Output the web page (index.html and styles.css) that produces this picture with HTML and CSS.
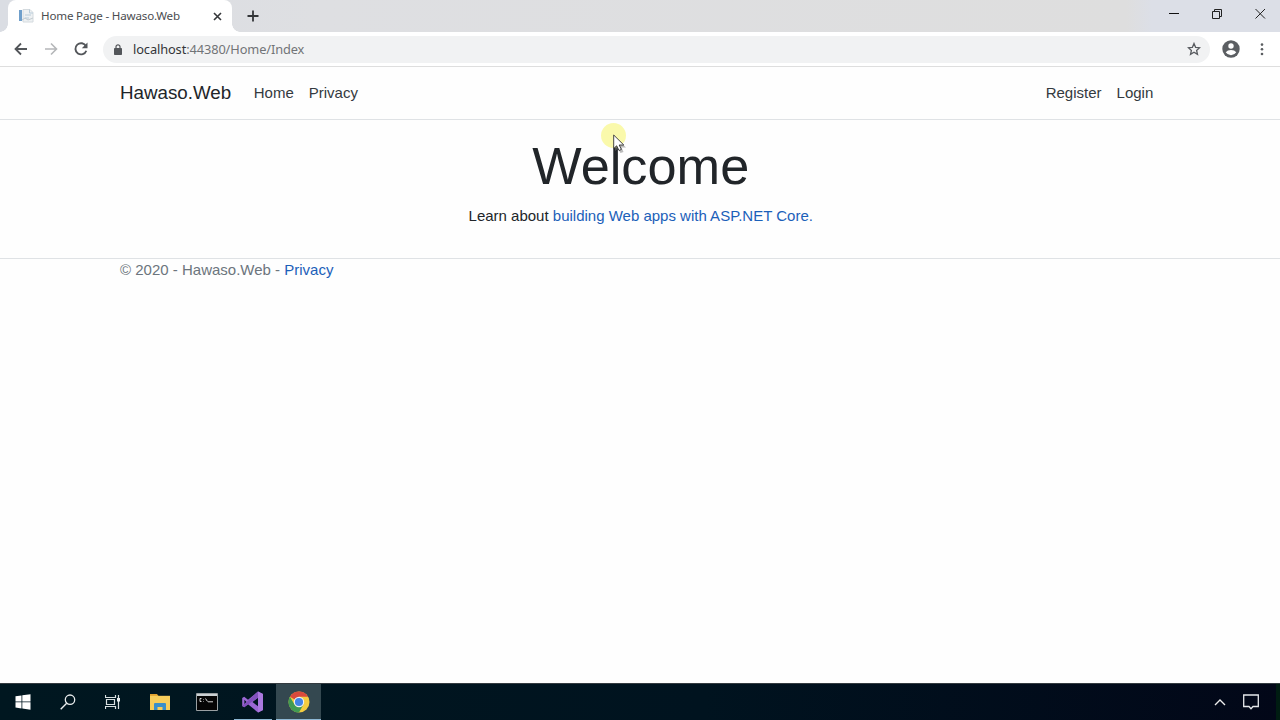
FILE: index.html
```html
<!DOCTYPE html>
<html lang="en">
<head>
<meta charset="utf-8">
<title>Home Page - Hawaso.Web</title>
<link rel="stylesheet" href="styles.css">
</head>
<body>
<div class="desktop">
  <div class="tabstrip">
    <div class="tab">
      <svg class="favicon" width="15" height="14" viewBox="0 0 15 14"><path d="M0 1h3v11H0z" fill="#6f9fcb"/><path d="M4 .5h7l3 3V13H4z" fill="#eef1f3" stroke="#d4dade"/><path d="M10.500.5v3.500H14M6 6h6M6 9h4" fill="none" stroke="#b8ccda"/><path d="M3 11l3-2 3 2 5-2" fill="none" stroke="#c3cbd0"/></svg>
      <span class="tab-title">Home Page - Hawaso.Web</span>
      <svg class="tab-close" width="9" height="9" viewBox="0 0 9 9"><path d="M1 1l7 7M8 1L1 8" stroke="#35373a" stroke-width="1.600"/></svg>
    </div>
    <svg class="new-tab" width="12" height="12" viewBox="0 0 12 12"><path d="M6 .5v11M.5 6h11" stroke="#333538" stroke-width="1.800"/></svg>
    <div class="window-controls">
      <svg width="12" height="12" viewBox="0 0 12 12"><path d="M1 5.500h10" stroke="#111"/></svg>
      <svg width="12" height="12" viewBox="0 0 12 12"><path d="M1.500 3.500h7v7h-7zM3.500 3.500v-2h7v7h-2" fill="none" stroke="#222"/></svg>
      <svg width="12" height="12" viewBox="0 0 12 12"><path d="M1.500 1l9.500 9.500M11 1L1.500 10.500" stroke="#222"/></svg>
    </div>
  </div>
  <div class="toolbar">
    <svg class="tool" width="20" height="20" viewBox="0 0 20 20"><path d="M16 10H4.500M10 4.500L4.500 10l5.500 5.500" fill="none" stroke="#53565a" stroke-width="1.800"/></svg>
    <svg class="tool" width="20" height="20" viewBox="0 0 20 20"><path d="M4 10h11.500M10 4.500l5.500 5.500-5.500 5.500" fill="none" stroke="#b5b7b9" stroke-width="1.600"/></svg>
    <svg class="tool" width="20" height="20" viewBox="0 0 20 20"><path d="M15 7.200A5.600 5.600 0 1 0 15.300 11.700" fill="none" stroke="#53565a" stroke-width="1.900"/><path d="M16.500 3.500v5.700h-5.700z" fill="#53565a"/></svg>
    <div class="omnibox">
      <svg class="lock" width="8" height="11" viewBox="0 0 8 11"><rect y="4" width="8" height="7" rx=".8" fill="#53565a"/><path d="M2 4.500V2.800a2 2 0 0 1 4 0v1.700" fill="none" stroke="#53565a" stroke-width="1.200"/></svg>
      <span class="url"><span class="host">localhost</span>:44380/Home/Index</span>
      <svg class="star" width="14" height="14" viewBox="0 0 14 14"><path d="M7 1.500l1.600 3.800 4 .4-3 2.700.9 4L7 10.300l-3.500 2.100.9-4-3-2.700 4-.4z" fill="none" stroke="#595c60" stroke-width="1.300"/></svg>
    </div>
    <svg class="avatar" width="18" height="18" viewBox="0 0 18 18"><circle cx="9" cy="9" r="8.700" fill="#5b5e62"/><circle cx="9" cy="6" r="2.700" fill="#fff"/><path d="M3.700 12.300Q5.500 10 9 10t5.300 2.300Q12.300 15.200 9 15.200t-5.300-2.900z" fill="#fff"/></svg>
    <svg class="dots" width="4" height="14" viewBox="0 0 4 14"><circle cx="2" cy="2.600" r="1.300" fill="#5b5e62"/><circle cx="2" cy="7.300" r="1.300" fill="#5b5e62"/><circle cx="2" cy="12" r="1.300" fill="#5b5e62"/></svg>
  </div>
  <div class="page">
    <header class="navbar">
      <div class="container nav-row">
        <a class="brand">Hawaso.Web</a>
        <a class="nav-link">Home</a>
        <a class="nav-link">Privacy</a>
        <span class="spacer"></span>
        <a class="nav-link">Register</a>
        <a class="nav-link">Login</a>
      </div>
    </header>
    <main class="container hero">
      <h1 class="welcome">Welcome</h1>
      <p class="learn">Learn about <a class="link">building Web apps with ASP.NET Core</a><span class="link">.</span></p>
    </main>
    <footer class="footer"><div class="container">© 2020 - Hawaso.Web - <a class="link">Privacy</a></div></footer>
  </div>
  <div class="taskbar">
    <div class="task"><svg width="16" height="16" viewBox="0 0 16 16"><path d="M.5 2.300l6-.9v6.100h-6zM7.300 1.300L15.500.2v7.300H7.300zM.5 8.300h6v6.100l-6-.8zM7.300 8.300h8.200v7.400l-8.200-1.200z" fill="#fff"/></svg></div>
    <div class="task"><svg width="16" height="16" viewBox="0 0 16 16"><circle cx="10" cy="5.700" r="4.700" fill="none" stroke="#e8eced" stroke-width="1.300"/><path d="M6.700 9.200L.7 15.300" stroke="#e8eced" stroke-width="1.400"/></svg></div>
    <div class="task"><svg width="16" height="16" viewBox="0 0 16 16"><path d="M.5 1v2.500h10V1M1.500 5.500h8v5h-8zM.5 15v-2.500h10V15M13.500 1v14" fill="none" stroke="#d8dfe0" stroke-width="1.200"/><path d="M12 4h3v3.500h-3z" fill="#e8eced"/></svg></div>
    <div class="task wide"><svg width="22" height="18" viewBox="0 0 22 18"><path d="M1 1h7l1.500 2H1z" fill="#dfa12f"/><path d="M1 2.800h20V17H1z" fill="#f6cd5b"/><path d="M5 17v-6q0-1 1-1h10q1 0 1 1v6h-3.500v-3h-5v3z" fill="#398fcb"/></svg></div>
    <div class="task wide"><svg class="console" width="22" height="18" viewBox="0 0 22 18"><path d="M.5.500h21v17H.5z" fill="#050505" stroke="#9aa0a2"/><path d="M1 1h20v2H1z" fill="#cbd1d3"/><path d="M5.500 5.500H4v3h1.500M7.500 6v.5M7.500 8v.5M9.500 5.500l2 3M12 8.800h5" fill="none" stroke="#d6d6d6"/></svg></div>
    <div class="task wide running"><svg width="24" height="24" viewBox="0 0 24 24"><path d="M17 1.500l5 2.500v16l-5 2.500-10-8.200-3.800 3-2-1.200V7.900l2-1.200L7 9.800zM17 7.700L11.500 12l5.500 4.300zM3.400 9.700v4.600L5.600 12z" fill="#9b68d4" fill-rule="evenodd"/><path d="M17 1.500l5 2.500v16l-5 2.500z" fill="#aa79df"/><path d="M1.200 16.100L3.200 17.300 17 7.700V1.500z" fill="#8150bd"/></svg></div>
    <div class="task active"><svg width="22" height="22" viewBox="0 0 22 22"><circle cx="11" cy="11" r="10.500" fill="#f4cc40"/><path d="M11 11L1.900 5.750A10.500 10.500 0 0 1 20.100 5.750H11z" fill="#d94a3d"/><path d="M1.900 5.750A10.500 10.500 0 0 0 11 21.500l4.500-7.900L11 11 6.500 13.600z" fill="#419b52"/><circle cx="11" cy="11" r="5.200" fill="#f2f3f2"/><circle cx="11" cy="11" r="4.100" fill="#4385e6"/></svg></div>
    <span class="spacer"></span>
    <svg class="tray-up" width="12" height="8" viewBox="0 0 12 8"><path d="M1 7l5-5 5 5" fill="none" stroke="#eee" stroke-width="1.400"/></svg>
    <svg class="tray-note" width="16" height="16" viewBox="0 0 16 16"><path d="M.7 1h14.600v11.500H10L8 14.800l-2-2.300H.7z" fill="none" stroke="#e5e7ea" stroke-width="1.300"/></svg>
    <span class="show-desktop"></span>
  </div>
  <span class="halo"></span>
  <svg class="cursor" width="14" height="20" viewBox="0 0 14 20"><path d="M2 3v14l3-2.500 2.500 4.500 3-1-2-4.500H13z" fill="#777" opacity=".5"/><path d="M.7 1v13.500l3-2.700 2.300 4.700 2.400-1.100-2.200-4.400h4.600z" fill="#fff" stroke="#333" stroke-width=".9"/></svg>
</div>
</body>
</html>
```
FILE: styles.css
```css
* { box-sizing: border-box; }
body { margin: 0; background: #fff; font-family: "Liberation Sans", Arial, sans-serif; }
svg { display: block; flex: none; }
.desktop { position: relative; width: 1280px; height: 720px; overflow: hidden; display: flex; flex-direction: column; }
.tabstrip { height: 32px; flex: none; display: flex; align-items: center; padding-left: 8px; background: linear-gradient(90deg, #dadde3 0, #dedfe2 25%, #dedede 88%, #dcdfe7 90%); }
.tab { position: relative; width: 224px; height: 32px; display: flex; align-items: center; padding: 0 10px 0 11px; border-radius: 8px 8px 0 0; background: #fff; }
.tab::before, .tab::after { content: ""; position: absolute; bottom: 0; width: 8px; height: 8px; }
.tab::before { left: -8px; background: radial-gradient(circle at 0 0, transparent 7.5px, #fff 8px); }
.tab::after { right: -8px; background: radial-gradient(circle at 100% 0, transparent 7.5px, #fff 8px); }
.tab-title { margin-left: 7px; flex: 1; color: #4b4d50; font: 11.600px/16px "Noto Sans", sans-serif; letter-spacing: -.18px; white-space: nowrap; }
.new-tab { margin-left: 15px; }
.window-controls { margin-left: auto; display: flex; gap: 31px; padding: 0 14px 5px 0; }
.toolbar { height: 35px; flex: none; display: flex; align-items: center; padding: 0 16px 0 11px; background: #fff; border-bottom: 1px solid #dedede; }
.tool { margin-right: 10px; }
.omnibox { width: 1107px; height: 27px; margin-left: 2px; display: flex; align-items: center; padding: 0 9px 0 11px; border-radius: 14px; background: #f1f2f3; }
.url { margin-left: 11px; flex: 1; color: #717477; font: 12.800px/18px "Noto Sans", sans-serif; letter-spacing: -.1px; }
.host { color: #333538; }
.avatar { margin-left: 12px; }
.dots { margin-left: 20px; }
.page { flex: 1; background: #fefefe; font-size: 15px; line-height: 22.500px; color: #212529; }
.container { width: 1041.500px; margin: 0 auto; padding-left: .8px; }
.navbar { height: 53px; border-bottom: 1px solid #dfe2e5; }
.nav-row { height: 52px; display: flex; align-items: center; }
.brand { font-size: 18.750px; margin-right: 15px; }
.nav-link { padding: 0 7.500px; color: #343a40; }
.spacer { flex: 1; }
.hero { height: 138px; padding: 15px 0 0 1.500px; text-align: center; }
.welcome { margin: 0 0 7px; font-size: 52.300px; line-height: 63px; font-weight: 400; }
.learn { margin: 0; }
.link { color: #1b60b9; }
.footer { border-top: 1px solid #dfe2e5; color: #6c757d; }
.taskbar { height: 37px; flex: none; display: flex; align-items: center; border-top: 1px solid #343b40; background: linear-gradient(90deg, #001720 0, #00131f 55%, #020718 100%); }
.task { width: 45px; height: 36px; display: flex; align-items: center; justify-content: center; }
.task.wide { width: 46px; }
.task.wide:nth-child(4) { width: 49px; }
.running { background: linear-gradient(#8eb8d4, #8eb8d4) center bottom / 38px 1px no-repeat; }
.active { background: linear-gradient(#8eb8d4, #8eb8d4) center bottom / 45px 1px no-repeat, #344850; }
.tray-up { margin-right: 17px; }
.tray-note { margin-right: 17px; }
.show-desktop { width: 4px; height: 36px; background: #001c12; }
.halo { position: absolute; left: 601px; top: 123px; width: 25px; height: 25px; border-radius: 50%; background: rgba(247, 245, 120, .62); }
.cursor { position: absolute; left: 613px; top: 134px; }
```
